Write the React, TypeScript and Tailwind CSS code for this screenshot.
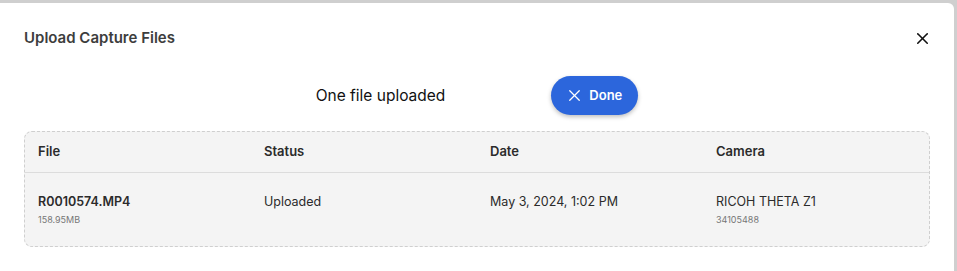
import { X } from "lucide-react"

const rows = [
  {
    file: "R0010574.MP4",
    size: "158.95MB",
    status: "Uploaded",
    date: "May 3, 2024, 1:02 PM",
    camera: "RICOH THETA Z1",
    serial: "34105488",
  },
]

export default function App() {
  return (
    <div className="h-[271px] w-[957px] overflow-hidden bg-[#cfcfcf] pt-[3px] pr-[3px] font-['Inter',sans-serif]">
      <div className="h-full rounded-tr-[6px] bg-white px-6 pt-[24px]">
        <div className="flex h-[22px] items-center justify-between">
          <h2 className="text-[15px] font-semibold text-[#3d3d3d]">Upload Capture Files</h2>
          <button className="mr-[-2px] text-[#111]">
            <X className="h-[19px] w-[19px]" strokeWidth={2} />
          </button>
        </div>

        <div className="mt-[27px] flex items-center justify-center gap-[106px]">
          <span className="text-[15.5px] text-[#111]">One file uploaded</span>
          <button className="flex h-[39px] items-center gap-[5px] rounded-full bg-[#2c66dc] pl-[14px] pr-[16px] text-[13px] font-semibold text-white shadow-[0_2px_4px_rgba(0,0,0,0.25)]">
            <X className="h-[19px] w-[19px]" strokeWidth={1.6} />
            Done
          </button>
        </div>

        <div className="mt-[16px] rounded-[8px] border border-dashed border-[#cfcfcf] bg-[#f4f4f4] text-[#2b2b2b]">
          <div className="grid h-[41px] grid-cols-4 items-center border-b border-[#dcdcdc] text-[13px] font-semibold">
            <div className="px-[13px]">File</div>
            <div className="px-[13px]">Status</div>
            <div className="px-[13px]">Date</div>
            <div className="px-[13px]">Camera</div>
          </div>
          {rows.map((r) => (
            <div key={r.file} className="grid h-[73px] grid-cols-4 pt-[20px] text-[12.5px]">
              <div className="px-[13px]">
                <div className="font-semibold">{r.file}</div>
                <div className="mt-[1px] text-[9px] text-[#777]">{r.size}</div>
              </div>
              <div className="px-[13px]">{r.status}</div>
              <div className="px-[13px]">{r.date}</div>
              <div className="px-[13px]">
                <div>{r.camera}</div>
                <div className="mt-[1px] text-[9px] text-[#777]">{r.serial}</div>
              </div>
            </div>
          ))}
        </div>
      </div>
    </div>
  )
}
